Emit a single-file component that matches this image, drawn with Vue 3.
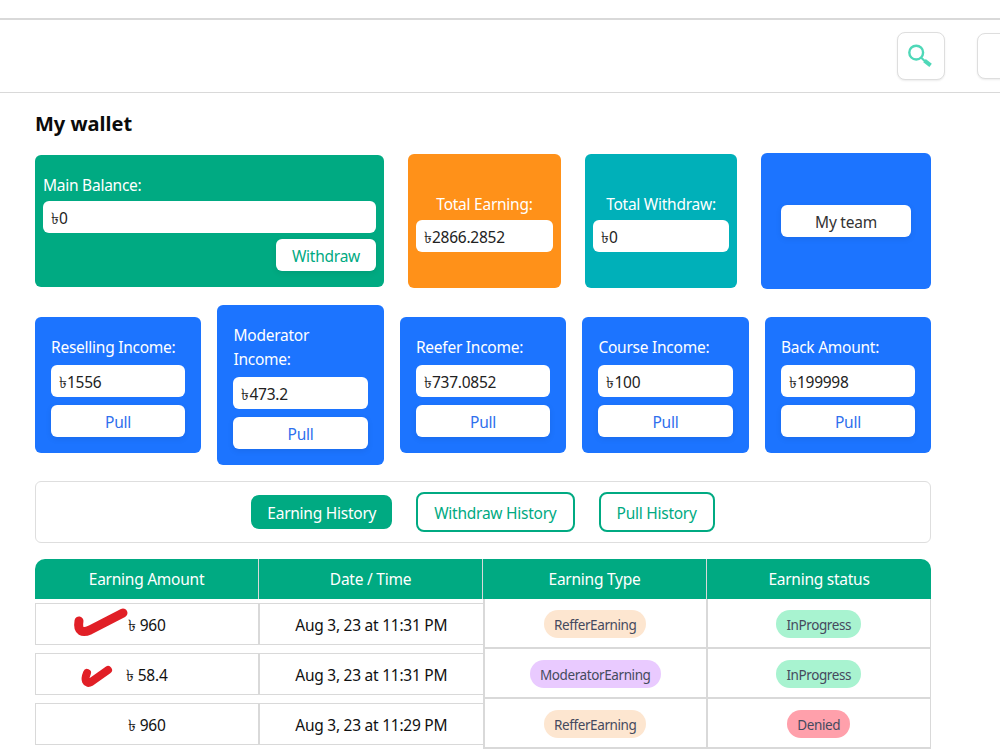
<script setup>
const incomes = [
  { label: 'Reselling Income:', value: '1556' },
  { label: 'Moderator Income:', value: '473.2' },
  { label: 'Reefer Income:', value: '737.0852' },
  { label: 'Course Income:', value: '100' },
  { label: 'Back Amount:', value: '199998' },
]
const heads = ['Earning Amount', 'Date / Time', 'Earning Type', 'Earning status']
const left = [
  { amount: '960', date: 'Aug 3, 23 at 11:31 PM', mark: 'long' },
  { amount: '58.4', date: 'Aug 3, 23 at 11:31 PM', mark: 'short' },
  { amount: '960', date: 'Aug 3, 23 at 11:29 PM', mark: '' },
]
const right = [
  { type: 'RefferEarning', tc: 'peach', status: 'InProgress', sc: 'mint' },
  { type: 'ModeratorEarning', tc: 'purple', status: 'InProgress', sc: 'mint' },
  { type: 'RefferEarning', tc: 'peach', status: 'Denied', sc: 'red' },
]
</script>

<template>
  <div class="page">
    <div class="topstrip"></div>
    <header class="header">
      <button class="iconbtn" aria-label="Search">
        <svg width="28" height="28" viewBox="0 0 28 28" fill="none">
          <circle cx="9.2" cy="10.6" r="6.9" stroke="#4fd8b8" stroke-width="2.4" />
          <path d="M14 15.5 L18 19.2" stroke="#4fd8b8" stroke-width="2.2" />
          <path d="M17.5 18.6 L23.6 23.4" stroke="#4fd8b8" stroke-width="4" />
        </svg>
      </button>
      <div class="iconbtn second"></div>
    </header>

    <main class="main">
      <h1 class="title">My wallet</h1>

      <section class="row-top">
        <div class="card green main-card">
          <div class="label">Main Balance:</div>
          <div class="field"><span class="tk">৳</span>0</div>
          <button class="btn withdraw">Withdraw</button>
        </div>
        <div class="card orange mid-card">
          <div class="label center">Total Earning:</div>
          <div class="field"><span class="tk">৳</span>2866.2852</div>
        </div>
        <div class="card teal mid-card">
          <div class="label center">Total Withdraw:</div>
          <div class="field"><span class="tk">৳</span>0</div>
        </div>
        <div class="card blue team-card">
          <button class="btn team">My team</button>
        </div>
      </section>

      <section class="row-income">
        <div v-for="i in incomes" :key="i.label" class="card blue income">
          <div class="label">{{ i.label }}</div>
          <div class="field"><span class="tk">৳</span>{{ i.value }}</div>
          <button class="btn pull">Pull</button>
        </div>
      </section>

      <nav class="tabs">
        <button class="tab active">Earning History</button>
        <button class="tab">Withdraw History</button>
        <button class="tab">Pull History</button>
      </nav>

      <section class="table">
        <div class="thead">
          <div v-for="h in heads" :key="h" class="th">{{ h }}</div>
        </div>
        <div class="tbody">
          <div class="left-rows">
            <div v-for="(r, n) in left" :key="n" class="lrow">
              <div class="lcell">
                <svg v-if="r.mark === 'long'" class="mark long" viewBox="0 0 58 34" fill="none">
                  <path d="M7 17 C5 28 11 29 18 26 L51 9" stroke="#e11f26" stroke-width="9" stroke-linecap="round" stroke-linejoin="round" />
                </svg>
                <svg v-if="r.mark === 'short'" class="mark short" viewBox="0 0 36 30" fill="none">
                  <path d="M8 13 C5 20 7 25 12 22 L29 10" stroke="#e11f26" stroke-width="8" stroke-linecap="round" stroke-linejoin="round" />
                </svg>
                <span class="amount"><span class="tk">৳</span> {{ r.amount }}</span>
              </div>
              <div class="lcell">{{ r.date }}</div>
            </div>
          </div>
          <div class="right-rows">
            <div v-for="(r, n) in right" :key="n" class="rrow">
              <div class="rcell"><span class="badge" :class="r.tc">{{ r.type }}</span></div>
              <div class="rcell"><span class="badge" :class="r.sc">{{ r.status }}</span></div>
            </div>
          </div>
        </div>
      </section>
    </main>
  </div>
</template>

<style>
html, body { overflow: hidden; background: #fff; }
</style>

<style scoped>
.page {
  height: 750px;
  overflow: hidden;
  font-family: "Noto Sans", "DejaVu Sans", sans-serif;
  font-size: 15.5px;
  letter-spacing: -0.25px;
  color: #111;
}
.tk {
  font-size: 16px;
  letter-spacing: 0;
}
.topstrip { height: 18px; border-bottom: 2px solid #d9d9d9; }
.header {
  height: 72px;
  border-bottom: 1px solid #d9d9d9;
  display: flex;
  justify-content: flex-end;
  align-items: center;
  gap: 32px;
  margin-right: -25px;
}
.iconbtn {
  width: 48px;
  height: 48px;
  box-sizing: border-box;
  border: 1px solid #dedede;
  border-radius: 8px;
  background: #fff;
  box-shadow: 0 1px 2px rgba(0, 0, 0, 0.08);
  padding: 0;
  display: flex;
  align-items: center;
  justify-content: center;
}
.iconbtn.second { height: 46px; }
.main { width: 896px; padding-left: 35px; }
.title {
  margin: 18px 0 0;
  height: 26px;
  line-height: 26px;
  font-size: 20px;
  letter-spacing: 0;
  font-weight: 700;
  color: #0b0b0b;
}
.row-top {
  display: grid;
  grid-template-columns: 349px 153px 152px 170px;
  gap: 24px;
  align-items: center;
  margin-top: 16px;
}
.card {
  border-radius: 6px;
  box-sizing: border-box;
  display: flex;
  flex-direction: column;
  color: #fff;
}
.green { background: #00aa82; }
.orange { background: #ff9119; }
.teal { background: #00b0b9; }
.blue { background: #1c74ff; }
.label { line-height: 24px; padding-top: 2px; margin-bottom: 4px; }
.label.center { text-align: center; }
.field {
  height: 32px;
  line-height: 34px;
  background: #fff;
  border-radius: 6px;
  color: #222;
  padding: 0 8px;
}
.btn {
  height: 32px;
  border: 0;
  border-radius: 6px;
  background: #fff;
  font: inherit;
  letter-spacing: inherit;
  padding: 2px 0 0;
  box-shadow: 0 2px 6px rgba(0, 0, 0, 0.08);
}
.main-card { height: 132px; padding: 16px 8px; }
.withdraw { width: 100px; margin: 6px 0 0 auto; color: #00aa82; }
.mid-card { height: 134px; padding: 0 8px; justify-content: center; }
.team-card { height: 136px; padding: 0 20px; justify-content: center; }
.team { color: #333; }
.row-income {
  display: grid;
  grid-template-columns: repeat(5, 1fr);
  gap: 16.4px;
  align-items: center;
  margin-top: 16px;
}
.income { padding: 16px; }
.income .label { margin-bottom: 6px; }
.pull { margin-top: 8px; color: #2f6fed; }
.tabs {
  margin-top: 16px;
  height: 62px;
  box-sizing: border-box;
  border: 1px solid #dedede;
  border-radius: 6px;
  display: flex;
  justify-content: center;
  align-items: center;
  gap: 24px;
}
.tab {
  height: 40px;
  padding: 2px 16px 0;
  box-sizing: border-box;
  border: 2px solid #00aa82;
  border-radius: 8px;
  background: #fff;
  color: #00aa82;
  font: inherit;
  letter-spacing: inherit;
}
.tab.active {
  height: 34px;
  padding: 2px 14px 0;
  background: #00aa82;
  color: #fff;
}
.table { margin-top: 16px; }
.thead {
  display: grid;
  grid-template-columns: repeat(4, 1fr);
  background: #00aa82;
  border-radius: 10px 10px 0 0;
  height: 40px;
}
.th {
  color: #fff;
  display: flex;
  align-items: center;
  justify-content: center;
  border-right: 1px solid #d9d9d9;
}
.th:last-child { border-right: 0; }
.tbody { display: grid; grid-template-columns: 1fr 1fr; }
.left-rows {
  display: flex;
  flex-direction: column;
  gap: 8px;
  padding-top: 4px;
}
.lrow {
  display: grid;
  grid-template-columns: 1fr 1fr;
  height: 42px;
  box-sizing: border-box;
  border: 1px solid #d9d9d9;
  border-right: 0;
}
.lcell {
  position: relative;
  display: flex;
  align-items: center;
  justify-content: center;
  color: #111;
  white-space: pre;
  padding-top: 2px;
}
.amount { line-height: 22px; }
.lcell:first-child { border-right: 2px solid #d9d9d9; }
.mark { position: absolute; }
.mark.long { left: 36px; top: 0; width: 58px; height: 34px; }
.mark.short { left: 43px; top: 6px; width: 36px; height: 30px; }
.rrow {
  display: grid;
  grid-template-columns: 1fr 1fr;
  height: 50px;
  box-sizing: border-box;
  border-left: 2px solid #d9d9d9;
  border-right: 1px solid #d9d9d9;
  border-bottom: 2px solid #d9d9d9;
}
.rcell {
  display: flex;
  align-items: center;
  justify-content: center;
  padding-top: 2px;
}
.rcell:first-child { border-right: 2px solid #d9d9d9; }
.badge {
  height: 28px;
  line-height: 30px;
  border-radius: 14px;
  padding: 0 10px;
  font-size: 13.5px;
  letter-spacing: -0.4px;
  color: #454a5e;
}
.peach { background: #fde6d0; }
.purple { background: #e9caff; }
.mint { background: #a8f3d0; }
.red { background: #ffa0ab; }
</style>
